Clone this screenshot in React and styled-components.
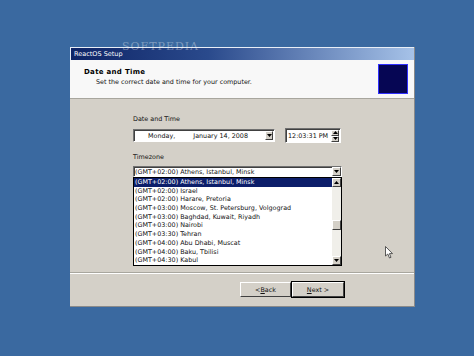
import styled, { createGlobalStyle } from "styled-components";

const zones = [
    "(GMT+02:00) Athens, Istanbul, Minsk",
    "(GMT+02:00) Israel",
    "(GMT+02:00) Harare, Pretoria",
    "(GMT+03:00) Moscow, St. Petersburg, Volgograd",
    "(GMT+03:00) Baghdad, Kuwait, Riyadh",
    "(GMT+03:00) Nairobi",
    "(GMT+03:30) Tehran",
    "(GMT+04:00) Abu Dhabi, Muscat",
    "(GMT+04:00) Baku, Tbilisi",
    "(GMT+04:30) Kabul",
];

const Arrow = ({ up }) => (
    <svg width="5" height="3" viewBox="0 0 5 3">
        <path d={up ? "M0 3 L2.5 0 L5 3 Z" : "M0 0 L5 0 L2.5 3 Z"} fill="#000" />
    </svg>
);

export default function App() {
    return (
        <>
            <Global />
            <Desktop>
                <Watermark>SOFTPEDIA</Watermark>
                <Window>
                    <TitleBar>ReactOS Setup</TitleBar>
                    <Header>
                        <HeaderText>
                            <h1>Date and Time</h1>
                            <p>Set the correct date and time for your computer.</p>
                        </HeaderText>
                        <Logo />
                    </Header>
                    <Body>
                        <Label>Date and Time</Label>
                        <PickerRow>
                            <DateBox>
                                <span>Monday,</span>
                                <span>January 14, 2008</span>
                                <DropButton $w={8} $h={9}>
                                    <Arrow />
                                </DropButton>
                            </DateBox>
                            <TimeBox>
                                <span>12:03:31 PM</span>
                                <Spinner>
                                    <SpinButton><Arrow up /></SpinButton>
                                    <SpinButton><Arrow /></SpinButton>
                                </Spinner>
                            </TimeBox>
                        </PickerRow>
                        <Label $top={10}>Timezone</Label>
                        <Combo>
                            <span>{zones[0]}</span>
                            <DropButton $w={9} $h={9}>
                                <Arrow />
                            </DropButton>
                        </Combo>
                        <ListBox>
                            <Items>
                                {zones.map((z, i) => (
                                    <Item key={i} $selected={i === 0}>{z}</Item>
                                ))}
                            </Items>
                            <ScrollBar>
                                <DropButton $w={9} $h={9}><Arrow up /></DropButton>
                                <Track>
                                    <Thumb />
                                </Track>
                                <DropButton $w={9} $h={9}><Arrow /></DropButton>
                            </ScrollBar>
                        </ListBox>
                    </Body>
                    <Footer>
                        <Button>&lt; <u>B</u>ack</Button>
                        <Button $default><u>N</u>ext &gt;</Button>
                    </Footer>
                </Window>
                <Cursor width="9" height="13" viewBox="0 0 9 13">
                    <path d="M0.5 0.5 L0.5 10 L2.8 8 L4.5 12 L6 11.3 L4.4 7.6 L7.5 7.6 Z" fill="#fff" stroke="#333" strokeWidth="0.8" />
                </Cursor>
            </Desktop>
        </>
    );
}

const Global = createGlobalStyle`
    body {
        margin: 0;
        font-family: "DejaVu Sans", "Liberation Sans", sans-serif;
    }
`;

const Desktop = styled.div`
    position: relative;
    width: 474px;
    height: 356px;
    background: #3a69a0;
    padding: 47px 0 0 70px;
    box-sizing: border-box;
    overflow: hidden;
`;

const Watermark = styled.div`
    position: absolute;
    left: 122px;
    top: 40px;
    font-family: "DejaVu Serif", serif;
    font-size: 11px;
    letter-spacing: 1px;
    color: rgba(255, 255, 255, 0.35);
    z-index: 2;
`;

const Window = styled.div`
    width: 345px;
    height: 260px;
    background: #d4d0c8;
    border-right: 1px solid #8a8a8a;
    border-bottom: 1px solid #8a8a8a;
    box-sizing: border-box;
    display: flex;
    flex-direction: column;
`;

const TitleBar = styled.div`
    height: 12px;
    background: linear-gradient(90deg, #0e2466 0%, #2a4a8c 40%, #a6c2e8 100%);
    color: #fff;
    font-size: 6.5px;
    line-height: 12px;
    padding-left: 3px;
    border-top: 1px solid #e8eef6;
    border-left: 1px solid #e8eef6;
`;

const Header = styled.div`
    height: 39px;
    background: #f8f8f8;
    border-bottom: 1px solid #a8a69e;
    display: flex;
    align-items: center;
    justify-content: space-between;
    padding: 0 6px 0 14px;
    box-sizing: border-box;
`;

const HeaderText = styled.div`
    display: flex;
    flex-direction: column;
    gap: 2px;
    margin-top: -4px;

    h1 {
        margin: 0;
        font-size: 7px;
        font-weight: bold;
        letter-spacing: 0.3px;
        color: #000;
    }

    p {
        margin: 0 0 0 12px;
        font-size: 6.4px;
        color: #111;
    }
`;

const Logo = styled.div`
    width: 28px;
    height: 28px;
    background: #060654;
    border: 1px solid #3030ff;
`;

const Body = styled.div`
    flex: 1;
    padding: 16px 0 0 63px;
    display: flex;
    flex-direction: column;
    border-bottom: 1px solid #a8a69e;
    box-shadow: 0 1px 0 #fff;
`;

const Label = styled.div`
    font-size: 6.4px;
    color: #111;
    height: 9px;
    line-height: 9px;
    margin-top: ${(p) => (p.$top ? p.$top + "px" : "0")};
    margin-bottom: 4px;
`;

const PickerRow = styled.div`
    display: flex;
    gap: 10px;
    align-items: flex-start;
`;

const Sunken = styled.div`
    background: #fff;
    border-top: 1px solid #707070;
    border-left: 1px solid #707070;
    border-right: 1px solid #fff;
    border-bottom: 1px solid #fff;
    box-shadow: 0 0 0 1px #d4d0c8, inset 1px 1px 0 #404040;
    font-size: 6.4px;
    color: #111;
    display: flex;
    align-items: center;
    box-sizing: border-box;
`;

const DateBox = styled(Sunken)`
    width: 142px;
    height: 13px;
    margin-top: 1px;
    padding: 0 1px 0 14px;

    span:nth-child(2) {
        margin-left: 18px;
        flex: 1;
    }
`;

const TimeBox = styled(Sunken)`
    width: 56px;
    height: 15px;
    padding: 0 1px 0 2px;

    span {
        flex: 1;
    }
`;

const Spinner = styled.div`
    display: flex;
    flex-direction: column;
`;

const Raised = styled.div`
    background: #d4d0c8;
    border-top: 1px solid #fff;
    border-left: 1px solid #fff;
    border-right: 1px solid #404040;
    border-bottom: 1px solid #404040;
    box-sizing: border-box;
    display: flex;
    align-items: center;
    justify-content: center;
`;

const SpinButton = styled(Raised)`
    width: 8px;
    height: 6px;
`;

const DropButton = styled(Raised)`
    width: ${(p) => p.$w}px;
    height: ${(p) => p.$h}px;
    flex-shrink: 0;
`;

const Combo = styled(Sunken)`
    width: 209px;
    height: 11px;
    padding: 0 0 0 1px;

    span {
        flex: 1;
    }
`;

const ListBox = styled.div`
    width: 209px;
    height: 89px;
    background: #fff;
    border: 1px solid #000;
    box-sizing: border-box;
    display: flex;
`;

const Items = styled.div`
    flex: 1;
    display: flex;
    flex-direction: column;
`;

const Item = styled.div`
    height: 8.7px;
    line-height: 8.7px;
    font-size: 6.4px;
    padding-left: 1px;
    color: ${(p) => (p.$selected ? "#fff" : "#111")};
    background: ${(p) => (p.$selected ? "#0c1e6a" : "transparent")};
`;

const ScrollBar = styled.div`
    width: 9px;
    display: flex;
    flex-direction: column;
`;

const Track = styled.div`
    flex: 1;
    background: #f0efea;
    position: relative;
`;

const Thumb = styled(Raised)`
    position: absolute;
    left: 0;
    top: 33px;
    width: 9px;
    height: 10px;
`;

const Footer = styled.div`
    height: 33px;
    display: flex;
    align-items: flex-start;
    padding: 9px 0 0 170px;
    box-sizing: border-box;
    gap: 1px;
`;

const Button = styled.div`
    width: ${(p) => (p.$default ? "52px" : "51px")};
    height: 15px;
    background: #d4d0c8;
    box-sizing: border-box;
    border-top: 1px solid #fff;
    border-left: 1px solid #fff;
    border-right: 1px solid #404040;
    border-bottom: 1px solid #404040;
    outline: ${(p) => (p.$default ? "1px solid #000" : "none")};
    font-size: 6.4px;
    color: #111;
    display: flex;
    align-items: center;
    justify-content: center;

    u {
        text-decoration: underline;
    }
`;

const Cursor = styled.svg`
    position: absolute;
    left: 385px;
    top: 246px;
`;
